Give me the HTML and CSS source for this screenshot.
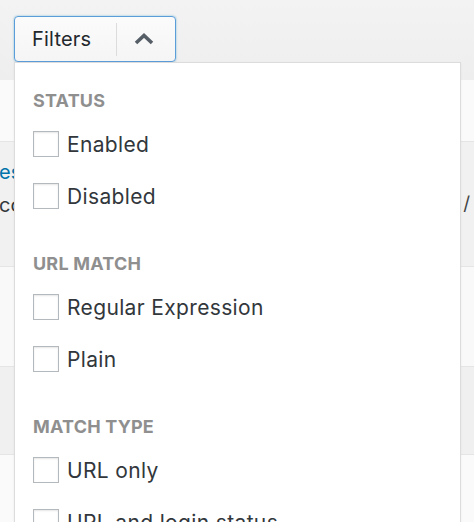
FILE: index.html
```html
<!DOCTYPE html>
<html>
<head>
<meta charset="utf-8">
<link rel="stylesheet" href="styles.css">
</head>
<body>
<div class="page">
  <div class="toolbar">
    <div class="filter-wrap">
      <button class="filters" type="button">
        <span class="filters-label">Filters</span>
        <span class="filters-sep"></span>
        <span class="filters-toggle">
          <svg width="22" height="14" viewBox="0 0 22 14"><path d="M3 11 L11 3.5 L19 11" fill="none" stroke="#555d66" stroke-width="3.6" stroke-linecap="butt" stroke-linejoin="miter"/></svg>
        </span>
      </button>
      <div class="dropdown">
        <div class="group">
          <div class="group-title">STATUS</div>
          <label class="option"><span class="box"></span><span class="option-text">Enabled</span></label>
          <label class="option"><span class="box"></span><span class="option-text">Disabled</span></label>
        </div>
        <div class="group">
          <div class="group-title">URL MATCH</div>
          <label class="option"><span class="box"></span><span class="option-text">Regular Expression</span></label>
          <label class="option"><span class="box"></span><span class="option-text">Plain</span></label>
        </div>
        <div class="group">
          <div class="group-title">MATCH TYPE</div>
          <label class="option"><span class="box"></span><span class="option-text">URL only</span></label>
          <label class="option"><span class="box"></span><span class="option-text">URL and login status</span></label>
        </div>
      </div>
    </div>
  </div>
  <div class="table">
    <div class="row row-a"></div>
    <div class="row row-b">
      <div class="cell-left">
        <div class="link">es</div>
        <div class="plain">cc</div>
      </div>
      <div class="cell-right"><span class="slash">/</span></div>
    </div>
    <div class="row row-c"></div>
    <div class="row row-d"></div>
    <div class="row row-e"></div>
  </div>
</div>
</body>
</html>
```
FILE: styles.css
```css
html, body {
  margin: 0;
  padding: 0;
}
body {
  width: 474px;
  height: 522px;
  overflow: hidden;
  background: #f1f1f1;
  font-family: Inter, "Noto Sans", "Liberation Sans", sans-serif;
  color: #32373c;
}
.page {
  width: 474px;
}
.toolbar {
  height: 80px;
  box-sizing: border-box;
  padding: 16px 0 0 14px;
  background: linear-gradient(#f3f3f3, #eeeeee);
  position: relative;
  z-index: 2;
}
.filter-wrap {
  position: relative;
  width: 162px;
}
.filters {
  display: flex;
  align-items: center;
  width: 162px;
  height: 46px;
  box-sizing: border-box;
  padding: 0;
  margin: 0;
  border: 1px solid #5b9dd9;
  border-radius: 4px;
  background: linear-gradient(#fbfbfb, #f5f5f5);
  box-shadow: 0 0 2px rgba(30, 140, 190, 0.6);
  font-family: inherit;
  font-size: 20px;
  color: #23282d;
  cursor: pointer;
}
.filters-label {
  padding: 0 25px 0 17px;
  line-height: 44px;
  letter-spacing: 0.2px;
}
.filters-sep {
  width: 1px;
  height: 33px;
  background: #dcdcdc;
}
.filters-toggle {
  flex: 1;
  display: flex;
  justify-content: center;
  padding-right: 4px;
}
.filters-toggle svg {
  display: block;
}
.dropdown {
  position: absolute;
  top: 46px;
  left: 0;
  width: 447px;
  height: 500px;
  box-sizing: border-box;
  background: #fff;
  border: 1px solid #dcdcdc;
  box-shadow: 0 1px 2px rgba(0, 0, 0, 0.06);
  padding: 28px 0 0 18px;
  overflow: hidden;
}
.group + .group {
  margin-top: 32px;
}
.group-title {
  font-size: 18px;
  font-weight: 700;
  line-height: 20px;
  color: #8f8f8f;
  letter-spacing: 0.2px;
  margin-bottom: 7px;
}
.option {
  display: flex;
  align-items: center;
  height: 52px;
}
.box {
  width: 26px;
  height: 26px;
  box-sizing: border-box;
  border: 1px solid #b4b9be;
  background: #fff;
  box-shadow: inset 0 1px 2px rgba(0, 0, 0, 0.1);
  margin-right: 8px;
  flex: none;
}
.option-text {
  font-size: 21px;
  letter-spacing: 0.35px;
  color: #32373c;
}
.table {
  position: relative;
  z-index: 1;
}
.row {
  border-bottom: 1px solid #e5e5e5;
}
.row-a {
  height: 61px;
  background: #fafafa;
}
.row-b {
  height: 124px;
  background: #f1f1f1;
  display: flex;
  justify-content: space-between;
}
.row-c {
  height: 99px;
  background: #f9f9f9;
}
.row-d {
  height: 87px;
  background: #f0f0f0;
}
.row-e {
  height: 80px;
  background: #fafafa;
}
.cell-left {
  padding-top: 14px;
  margin-left: -1px;
  font-size: 20px;
  line-height: 33px;
}
.link {
  color: #0073aa;
}
.plain {
  color: #32373c;
}
.cell-right {
  padding-top: 50px;
  padding-right: 4px;
  font-size: 19px;
}
.slash {
  color: #444;
}
```
